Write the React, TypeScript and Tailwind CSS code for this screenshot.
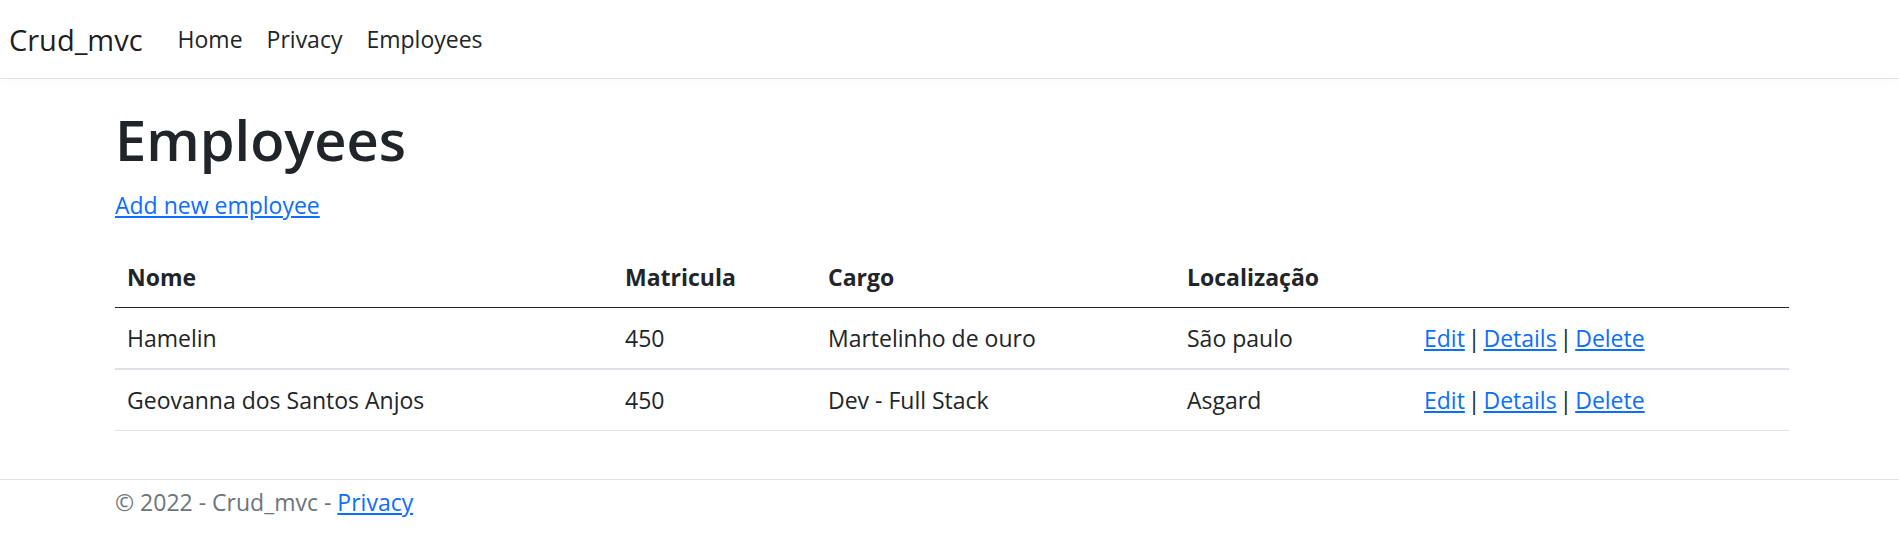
import React from 'react';

const employees = [
  { nome: 'Hamelin', matricula: '450', cargo: 'Martelinho de ouro', local: 'São paulo' },
  { nome: 'Geovanna dos Santos Anjos', matricula: '450', cargo: 'Dev - Full Stack', local: 'Asgard' },
];

const font = { fontFamily: '"Open Sans", "Noto Sans", sans-serif' };

function RowLinks() {
  return (
    <span className="[word-spacing:-3px]">
      <a href="#" className="text-[#0d6efd] underline">Edit</a> |{' '}
      <a href="#" className="text-[#0d6efd] underline">Details</a> |{' '}
      <a href="#" className="text-[#0d6efd] underline">Delete</a>
    </span>
  );
}

export default function App() {
  return (
    <div className="min-h-screen bg-white text-[#212529] text-[23px] leading-[36px]" style={font}>
      <header className="h-[79px] border-b border-[#dee2e6] shadow-[0_4px_12px_rgba(0,0,0,0.02)] bg-white flex items-center pl-[9px]">
        <a href="#" className="text-[29px] leading-[45px] text-black/90 mr-[23px]">Crud_mvc</a>
        <nav className="flex items-center">
          <a href="#" className="px-[12px] text-[#212529]">Home</a>
          <a href="#" className="px-[12px] text-[#212529]">Privacy</a>
          <a href="#" className="px-[12px] text-[#212529]">Employees</a>
        </nav>
      </header>

      <main className="ml-[115px] w-[1674px] pt-[24px] pb-[24px]">
        <h1 className="text-[56px] leading-[72px] font-semibold mb-[12px]">Employees</h1>
        <p className="mb-[24px]">
          <a href="#" className="text-[#0d6efd] underline">Add new employee</a>
        </p>
        <table className="w-full border-collapse mb-[24px]">
          <thead>
            <tr className="border-b border-[#212529] text-left">
              <th className="w-[498px] px-[12px] py-[12px] font-bold">Nome</th>
              <th className="w-[203px] px-[12px] py-[12px] font-bold">Matricula</th>
              <th className="w-[359px] px-[12px] py-[12px] font-bold">Cargo</th>
              <th className="w-[237px] px-[12px] py-[12px] font-bold">Localização</th>
              <th className="px-[12px] py-[12px]"></th>
            </tr>
          </thead>
          <tbody>
            {employees.map((e, i) => (
              <tr key={i} className={i === 0 ? 'border-b-2 border-[#dee2e6]' : 'border-b border-[#dee2e6]'}>
                <td className="px-[12px] py-[12px]">{e.nome}</td>
                <td className="px-[12px] py-[12px]">{e.matricula}</td>
                <td className="px-[12px] py-[12px]">{e.cargo}</td>
                <td className="px-[12px] py-[12px]">{e.local}</td>
                <td className="px-[12px] py-[12px]"><RowLinks /></td>
              </tr>
            ))}
          </tbody>
        </table>
      </main>

      <footer className="border-t border-[#dee2e6] text-[#6c757d] pt-[4px] pb-[20px]">
        <div className="ml-[115px]">
          © 2022 - Crud_mvc - <a href="#" className="text-[#0d6efd] underline">Privacy</a>
        </div>
      </footer>
    </div>
  );
}
